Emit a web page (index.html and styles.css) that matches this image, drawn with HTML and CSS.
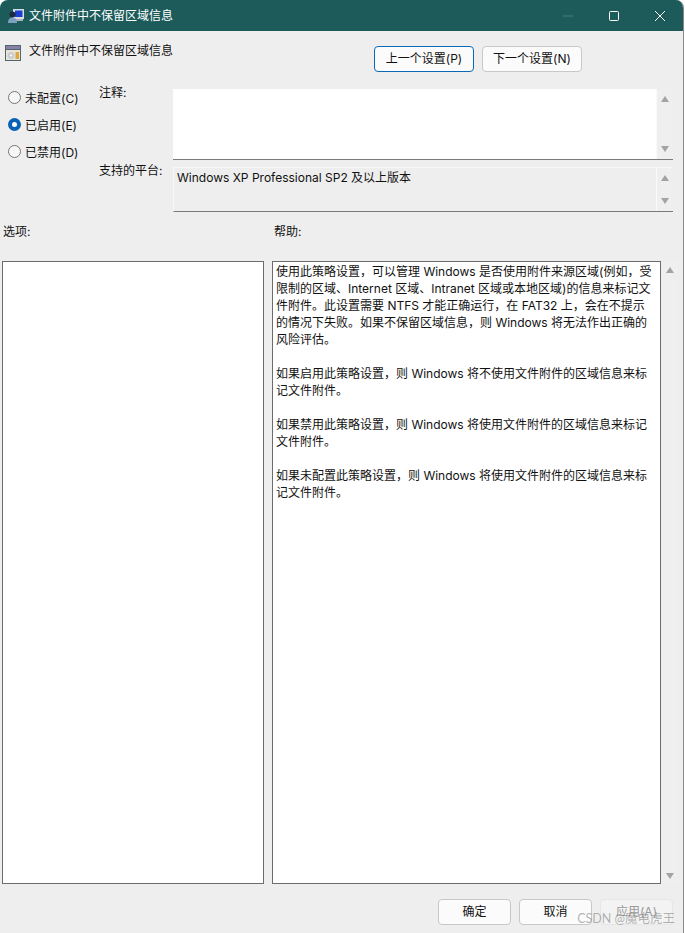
FILE: index.html
```html
<!DOCTYPE html>
<html lang="zh-CN">
<head>
    <meta charset="UTF-8" />
    <meta name="viewport" content="width=device-width, initial-scale=1" />
    <title>文件附件中不保留区域信息</title>
    <link rel="stylesheet" href="styles.css">
</head>
<body>
    <div class="window">
        <div class="titlebar">
            <svg class="app-icon" width="16" height="16" viewBox="0 0 16 16">
                <rect x="5" y="1" width="11" height="10" fill="#d8dde2"/>
                <rect x="7" y="2.500" width="7.500" height="6.500" fill="#1c3fd0"/>
                <rect x="8" y="11" width="7" height="2" fill="#aab2ba"/>
                <circle cx="4.500" cy="6.500" r="3" fill="#1d2a3a"/>
                <path d="M0 15c0-4 2-5.500 4.500-5.500S9 11 9 15z" fill="#7f9fc0"/>
            </svg>
            <span class="titlebar-text">文件附件中不保留区域信息</span>
            <div class="window-controls">
                <span class="ctl"><svg width="12" height="12" viewBox="0 0 12 12"><path d="M1 6h10" stroke="#4d7f7e" fill="none"/></svg></span>
                <span class="ctl"><svg width="12" height="12" viewBox="0 0 12 12"><rect x="1.500" y="1.500" width="9" height="9" rx="1" stroke="#fff" fill="none"/></svg></span>
                <span class="ctl"><svg width="12" height="12" viewBox="0 0 12 12"><path d="M1 1l10 10M11 1L1 11" stroke="#fff" fill="none"/></svg></span>
            </div>
        </div>

        <div class="dialog">
            <div class="head-row">
                <div class="policy-name">
                    <svg width="16" height="16" viewBox="0 0 16 16">
                        <rect x="0" y="0" width="16" height="16" fill="#4f666c"/>
                        <rect x="1" y="1" width="14" height="3" fill="#8a7fa8"/>
                        <rect x="1" y="5" width="14" height="10" fill="#e9e4d6"/>
                        <circle cx="6" cy="10.500" r="3.500" fill="#c9ced2"/>
                        <circle cx="6" cy="10.500" r="1" fill="#fff"/>
                        <rect x="10.500" y="7" width="3.500" height="7" fill="#e0a83c"/>
                    </svg>
                    <span>文件附件中不保留区域信息</span>
                </div>
                <div class="nav-buttons">
                    <button class="btn btn-focus">上一个设置(P)</button>
                    <button class="btn">下一个设置(N)</button>
                </div>
            </div>

            <div class="config">
                <div class="radios">
                    <label class="radio"><span class="dot"></span>未配置(C)</label>
                    <label class="radio"><span class="dot dot-on"></span>已启用(E)</label>
                    <label class="radio"><span class="dot"></span>已禁用(D)</label>
                </div>
                <div class="fields">
                    <div class="field-row">
                        <div class="field-label">注释:</div>
                        <div class="field field-note">
                            <div class="field-body"></div>
                            <div class="scrollbar">
                                <span class="arrow-up"></span>
                                <span class="arrow-down"></span>
                            </div>
                        </div>
                    </div>
                    <div class="field-row">
                        <div class="field-label">支持的平台:</div>
                        <div class="field field-platform">
                            <div class="field-body">Windows XP Professional SP2 及以上版本</div>
                            <div class="scrollbar">
                                <span class="arrow-up"></span>
                                <span class="arrow-down"></span>
                            </div>
                        </div>
                    </div>
                </div>
            </div>

            <div class="section-labels">
                <div class="options-label">选项:</div>
                <div>帮助:</div>
            </div>

            <div class="panes">
                <div class="pane pane-options"></div>
                <div class="pane pane-help">
                    <p>使用此策略设置，可以管理 Windows 是否使用附件来源区域(例如，受<br>限制的区域、Internet 区域、Intranet 区域或本地区域)的信息来标记文<br>件附件。此设置需要 NTFS 才能正确运行，在 FAT32 上，会在不提示<br>的情况下失败。如果不保留区域信息，则 Windows 将无法作出正确的<br>风险评估。</p>
                    <p>如果启用此策略设置，则 Windows 将不使用文件附件的区域信息来标<br>记文件附件。</p>
                    <p>如果禁用此策略设置，则 Windows 将使用文件附件的区域信息来标记<br>文件附件。</p>
                    <p>如果未配置此策略设置，则 Windows 将使用文件附件的区域信息来标<br>记文件附件。</p>
                </div>
                <div class="scrollbar help-scroll">
                    <span class="arrow-up"></span>
                    <span class="arrow-down"></span>
                </div>
            </div>

            <div class="footer">
                <button class="btn btn-footer">确定</button>
                <button class="btn btn-footer">取消</button>
                <button class="btn btn-footer btn-disabled">应用(A)</button>
            </div>
        </div>
        <div class="watermark">CSDN @魔电虎王</div>
    </div>
</body>
</html>
```

FILE: styles.css
```css
* {
    box-sizing: border-box;
}

html,
body {
    margin: 0;
    height: 100%;
    background-color: #fff;
}

body {
    font-family: Inter, "Noto Sans CJK SC", sans-serif;
    font-size: 12px;
    color: #111;
}

.window {
    position: relative;
    width: 684px;
    height: 933px;
    background-color: #eeeeee;
    border-right: 1px solid #8a8a8a;
    border-radius: 8px 8px 0 0;
    overflow: hidden;
}

.titlebar {
    display: flex;
    align-items: center;
    height: 31px;
    padding-left: 8px;
    background-color: #1c5b5a;
    color: #fff;
}

.app-icon {
    margin-right: 5px;
}

.titlebar-text {
    line-height: 29px;
}

.window-controls {
    display: flex;
    margin-left: auto;
}

.ctl {
    display: flex;
    align-items: center;
    justify-content: center;
    width: 46px;
    height: 31px;
}

.dialog {
    padding: 15px 0 0 2px;
}

.head-row {
    display: flex;
    justify-content: space-between;
    height: 38px;
}

.policy-name {
    display: flex;
    align-items: flex-start;
    gap: 8px;
    margin-top: -1px;
    padding-left: 3px;
}

.policy-name span {
    line-height: 12px;
}

.nav-buttons {
    display: flex;
    gap: 8px;
    padding-right: 101px;
}

.btn {
    height: 26px;
    width: 100px;
    padding: 0 0 4px;
    border: 1px solid #c8c8c8;
    border-radius: 4px;
    background-color: #fbfbfb;
    font: inherit;
    color: #111;
}

.btn-focus {
    border-color: #0a68b8;
}

.config {
    display: flex;
}

.radios {
    width: 97px;
    padding-left: 6px;
}

.radio {
    display: flex;
    align-items: center;
    gap: 4px;
    height: 27px;
    white-space: nowrap;
}

.dot {
    width: 13px;
    height: 13px;
    border: 1px solid #777;
    border-radius: 50%;
    background-color: #f6f6f6;
}

.dot-on {
    border: 4px solid #0a62b5;
    background-color: #fff;
}

.fields {
    display: flex;
    flex-direction: column;
    gap: 7px;
    padding-top: 5px;
}

.field-row {
    display: flex;
}

.field-label {
    width: 74px;
    line-height: 12px;
    margin-top: -2px;
    white-space: nowrap;
}

.field {
    display: flex;
    width: 500px;
    border-bottom: 1px solid #7a7a7a;
}

.field-note {
    height: 71px;
}

.field-platform {
    height: 45px;
    background-color: #eeeeee;
    border-top: 1px solid #f8f8f8;
    border-left: 1px solid #f8f8f8;
}

.field-note .field-body {
    background-color: #fff;
}

.field-body {
    flex: 1;
    padding: 2px 3px;
    line-height: 16px;
}

.scrollbar {
    display: flex;
    flex-direction: column;
    align-items: center;
    justify-content: space-between;
    width: 17px;
    padding: 7px 0;
    background-color: #efefef;
    border-left: 1px solid #fafafa;
}

.arrow-up {
    width: 0;
    height: 0;
    border-left: 4.5px solid transparent;
    border-right: 4.5px solid transparent;
    border-bottom: 6px solid #a3a3a3;
}

.arrow-down {
    width: 0;
    height: 0;
    border-left: 4.5px solid transparent;
    border-right: 4.5px solid transparent;
    border-top: 6px solid #a3a3a3;
}

.section-labels {
    display: flex;
    height: 31px;
    padding-top: 13px;
    line-height: 14px;
}

.options-label {
    width: 272px;
    padding-left: 1px;
}

.panes {
    display: flex;
    height: 623px;
    margin-top: 18px;
}

.pane {
    flex-shrink: 0;
    background-color: #fff;
    border: 1px solid #6c6c6c;
}

.pane-options {
    width: 262px;
    margin-right: 8px;
}

.pane-help {
    width: 389px;
    padding: 1px 3px 0;
    line-height: 17px;
    white-space: nowrap;
}

.pane-help p {
    margin: 0 0 17px;
}

.help-scroll {
    border-left: none;
    width: 17px;
    padding: 6px 0 5px;
}

.footer {
    display: flex;
    justify-content: flex-end;
    gap: 8px;
    margin-top: 15px;
    padding-right: 10px;
}

.btn-footer {
    width: 73px;
}

.btn-disabled {
    color: #9a9a9a;
    border-color: #e6e6e6;
    background-color: #f3f3f3;
}

.watermark {
    position: absolute;
    right: 8px;
    bottom: 6px;
    font-family: Lato, "Noto Sans CJK SC", sans-serif;
    font-size: 12.5px;
    color: rgba(120, 120, 120, 0.55);
    pointer-events: none;
}
```
